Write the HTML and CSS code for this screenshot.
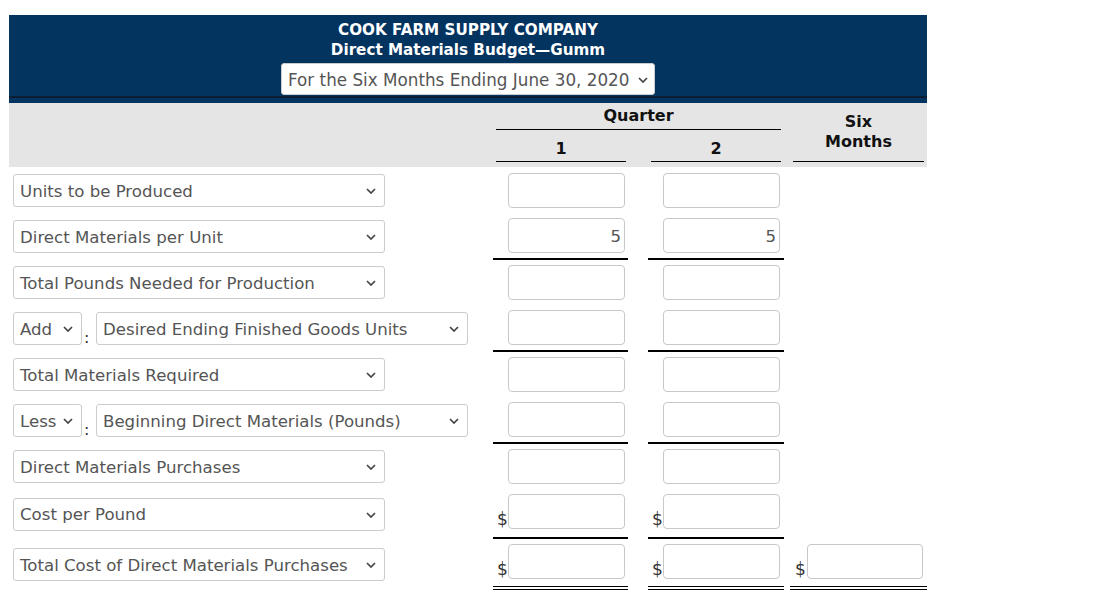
FILE: index.html
```html
<!DOCTYPE html>
<html>
<head>
<meta charset="utf-8">
<title>Direct Materials Budget</title>
<link rel="stylesheet" href="styles.css">
</head>
<body>
<div class="page">
  <div class="hdr">
    <div class="hdr-in">
      <div class="ttl">COOK FARM SUPPLY COMPANY</div>
      <div class="ttl">Direct Materials Budget—Gumm</div>
      <div class="sel period"><span>For the Six Months Ending June 30, 2020</span><svg class="chev" viewBox="0 0 10 6"><path d="M1 1 L5 5 L9 1"/></svg></div>
    </div>
  </div>

  <div class="band">
    <div class="h-quarter">Quarter</div>
    <div class="h-q1">1</div>
    <div class="h-q2">2</div>
    <div class="h-six">Six<br>Months</div>
  </div>

  <div class="rows">
    <div class="row">
      <div class="lbl"><div class="sel wide"><span>Units to be Produced</span><svg class="chev" viewBox="0 0 10 6"><path d="M1 1 L5 5 L9 1"/></svg></div></div>
      <div class="num c1"><span class="cur"></span><input class="inp" type="text" value=""></div>
      <div></div>
      <div class="num c2"><span class="cur"></span><input class="inp" type="text" value=""></div>
      <div></div>
      <div></div>
    </div>

    <div class="row">
      <div class="lbl"><div class="sel wide"><span>Direct Materials per Unit</span><svg class="chev" viewBox="0 0 10 6"><path d="M1 1 L5 5 L9 1"/></svg></div></div>
      <div class="num c1 line"><span class="cur"></span><input class="inp" type="text" value="5"></div>
      <div></div>
      <div class="num c2 line"><span class="cur"></span><input class="inp" type="text" value="5"></div>
      <div></div>
      <div></div>
    </div>

    <div class="row">
      <div class="lbl"><div class="sel wide"><span>Total Pounds Needed for Production</span><svg class="chev" viewBox="0 0 10 6"><path d="M1 1 L5 5 L9 1"/></svg></div></div>
      <div class="num c1"><span class="cur"></span><input class="inp" type="text" value=""></div>
      <div></div>
      <div class="num c2"><span class="cur"></span><input class="inp" type="text" value=""></div>
      <div></div>
      <div></div>
    </div>

    <div class="row">
      <div class="lbl">
        <div class="sel small"><span>Add</span><svg class="chev" viewBox="0 0 10 6"><path d="M1 1 L5 5 L9 1"/></svg></div>
        <span class="colon">:</span>
        <div class="sel wide"><span>Desired Ending Finished Goods Units</span><svg class="chev" viewBox="0 0 10 6"><path d="M1 1 L5 5 L9 1"/></svg></div>
      </div>
      <div class="num c1 line"><span class="cur"></span><input class="inp" type="text" value=""></div>
      <div></div>
      <div class="num c2 line"><span class="cur"></span><input class="inp" type="text" value=""></div>
      <div></div>
      <div></div>
    </div>

    <div class="row">
      <div class="lbl"><div class="sel wide"><span>Total Materials Required</span><svg class="chev" viewBox="0 0 10 6"><path d="M1 1 L5 5 L9 1"/></svg></div></div>
      <div class="num c1"><span class="cur"></span><input class="inp" type="text" value=""></div>
      <div></div>
      <div class="num c2"><span class="cur"></span><input class="inp" type="text" value=""></div>
      <div></div>
      <div></div>
    </div>

    <div class="row">
      <div class="lbl">
        <div class="sel small"><span>Less</span><svg class="chev" viewBox="0 0 10 6"><path d="M1 1 L5 5 L9 1"/></svg></div>
        <span class="colon">:</span>
        <div class="sel wide"><span>Beginning Direct Materials (Pounds)</span><svg class="chev" viewBox="0 0 10 6"><path d="M1 1 L5 5 L9 1"/></svg></div>
      </div>
      <div class="num c1 line"><span class="cur"></span><input class="inp" type="text" value=""></div>
      <div></div>
      <div class="num c2 line"><span class="cur"></span><input class="inp" type="text" value=""></div>
      <div></div>
      <div></div>
    </div>

    <div class="row">
      <div class="lbl"><div class="sel wide"><span>Direct Materials Purchases</span><svg class="chev" viewBox="0 0 10 6"><path d="M1 1 L5 5 L9 1"/></svg></div></div>
      <div class="num c1"><span class="cur"></span><input class="inp" type="text" value=""></div>
      <div></div>
      <div class="num c2"><span class="cur"></span><input class="inp" type="text" value=""></div>
      <div></div>
      <div></div>
    </div>

    <div class="row">
      <div class="lbl"><div class="sel wide"><span>Cost per Pound</span><svg class="chev" viewBox="0 0 10 6"><path d="M1 1 L5 5 L9 1"/></svg></div></div>
      <div class="num c1 line tall"><span class="cur">$</span><input class="inp" type="text" value=""></div>
      <div></div>
      <div class="num c2 line tall"><span class="cur">$</span><input class="inp" type="text" value=""></div>
      <div></div>
      <div></div>
    </div>

    <div class="row">
      <div class="lbl"><div class="sel wide"><span>Total Cost of Direct Materials Purchases</span><svg class="chev" viewBox="0 0 10 6"><path d="M1 1 L5 5 L9 1"/></svg></div></div>
      <div class="num c1 dbl"><span class="cur">$</span><input class="inp" type="text" value=""></div>
      <div></div>
      <div class="num c2 dbl"><span class="cur">$</span><input class="inp" type="text" value=""></div>
      <div></div>
      <div class="num c3 dbl"><span class="cur">$</span><input class="inp" type="text" value=""></div>
    </div>
  </div>
</div>
</body>
</html>
```

FILE: styles.css
```css
body {
  margin: 0;
  background: #ffffff;
  font-family: "DejaVu Sans", Verdana, sans-serif;
  color: #555555;
}

.page {
  width: 918px;
  margin: 15px 0 0 9px;
}

/* ---------- header ---------- */
.hdr {
  background: #03335f;
  padding-bottom: 5px;
}

.hdr-in {
  display: flex;
  flex-direction: column;
  align-items: center;
  padding-top: 5px;
  padding-bottom: 1px;
  border-bottom: 2px solid #0c1d36;
}

.ttl {
  color: #ffffff;
  font-weight: bold;
  font-size: 15.2px;
  line-height: 20px;
}

/* ---------- select look-alike ---------- */
.sel {
  box-sizing: border-box;
  display: flex;
  align-items: center;
  justify-content: space-between;
  height: 33px;
  padding: 1px 8px 0 6px;
  background: #ffffff;
  border: 1px solid #cccccc;
  border-radius: 3px;
  font-size: 16.6px;
  color: #555555;
  white-space: nowrap;
}

.chev {
  width: 10px;
  height: 6px;
  flex: none;
  fill: none;
  stroke: #444444;
  stroke-width: 1.7;
}

.period {
  margin-top: 3px;
  width: 374px;
  height: 32px;
  padding-top: 2px;
  padding-right: 6px;
  font-size: 16.8px;
}

.wide {
  width: 372px;
}

.small {
  width: 69px;
}

.colon {
  align-self: flex-end;
  width: 14px;
  padding-left: 2px;
  box-sizing: border-box;
  font-size: 16px;
  color: #333333;
  line-height: 20px;
  margin-bottom: 4px;
}

/* ---------- column header band ---------- */
.band {
  display: grid;
  grid-template-columns: 484px 135px 20px 136px 6px 137px;
  background: #e5e5e5;
  padding: 3px 0 5px;
  font-weight: bold;
  font-size: 16px;
  color: #111111;
  text-align: center;
}

.h-quarter {
  grid-column: 2 / 5;
  grid-row: 1;
  margin: 0 3px;
  line-height: 20px;
  padding-bottom: 2px;
  border-bottom: 1px solid #000000;
}

.h-q1,
.h-q2 {
  grid-row: 2;
  align-self: start;
  line-height: 20px;
  padding-top: 9px;
  padding-bottom: 2px;
  border-bottom: 1px solid #000000;
}

.h-q1 {
  grid-column: 2;
  margin: 0 2px 0 3px;
}

.h-q2 {
  grid-column: 4;
  margin: 0 3px;
}

.h-six {
  grid-column: 6;
  grid-row: 1 / 3;
  align-self: start;
  margin: 0 3px;
  line-height: 20px;
  padding-top: 6px;
  padding-bottom: 9px;
  border-bottom: 1px solid #000000;
}

/* ---------- rows ---------- */
.rows {
  margin-top: 1px;
}

.row {
  display: grid;
  grid-template-columns: 484px 135px 20px 136px 6px 137px;
}

.lbl {
  display: flex;
  align-items: center;
  padding-left: 4px;
}

.num {
  display: flex;
  align-items: flex-end;
  padding: 5px 3px 5px 4px;
}

.c2 {
  padding-right: 4px;
}

.c3 {
  padding-left: 5px;
  padding-right: 4px;
}

.cur {
  width: 11px;
  flex: none;
  font-size: 17px;
  line-height: 19px;
  color: #333333;
}

.c3 .cur {
  width: 12px;
}

.inp {
  box-sizing: border-box;
  width: 117px;
  height: 35px;
  margin: 0;
  padding: 1px 3px 0;
  border: 1px solid #c8c8c8;
  border-radius: 4px;
  background: #ffffff;
  font-family: "DejaVu Sans", Verdana, sans-serif;
  font-size: 16.6px;
  color: #555555;
  text-align: right;
  outline: none;
}

.c3 .inp {
  width: 116px;
}

.line {
  border-bottom: 2px solid #000000;
}

.tall {
  padding-bottom: 8px;
}

.dbl {
  padding-bottom: 7px;
  border-bottom: 4px double #000000;
}
```
